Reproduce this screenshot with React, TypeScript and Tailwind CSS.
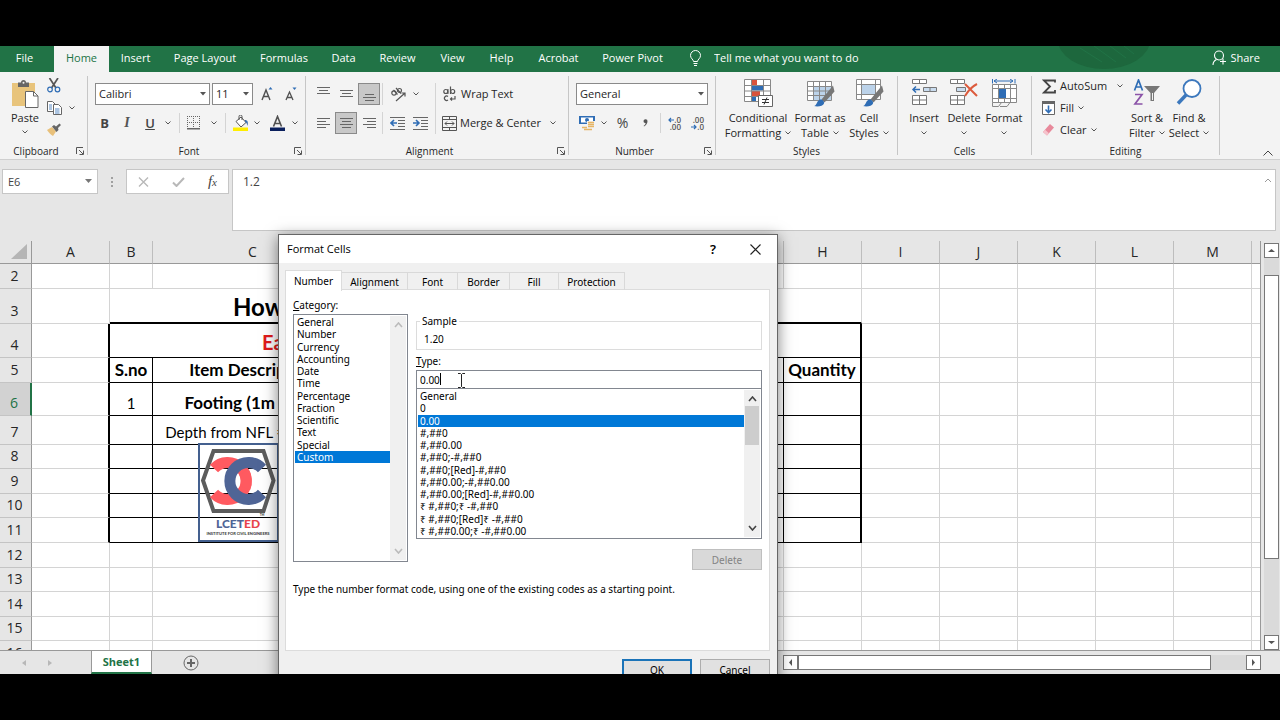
import type { ReactNode } from 'react';
import clsx from 'clsx';

const ribbonTabs = [
  { label: 'Insert', width: 'w-[53px]' },
  { label: 'Page Layout', width: 'w-[86px]' },
  { label: 'Formulas', width: 'w-[72px]' },
  { label: 'Data', width: 'w-[47px]' },
  { label: 'Review', width: 'w-[61px]' },
  { label: 'View', width: 'w-[49px]' },
  { label: 'Help', width: 'w-[49px]' },
  { label: 'Acrobat', width: 'w-[65px]' },
  { label: 'Power Pivot', width: 'w-[83px]' },
];

const columns = [
  { name: 'A', width: 'w-[78px]' },
  { name: 'B', width: 'w-[43px]' },
  { name: 'C', width: 'w-[200px]' },
  { name: 'D', width: 'w-[108px]' },
  { name: 'E', width: 'w-[108px]' },
  { name: 'F', width: 'w-[107px]' },
  { name: 'G', width: 'w-[108px]' },
  { name: 'H', width: 'w-[78px]' },
  { name: 'I', width: 'w-[78px]' },
  { name: 'J', width: 'w-[78px]' },
  { name: 'K', width: 'w-[78px]' },
  { name: 'L', width: 'w-[78px]' },
  { name: 'M', width: 'w-[78px]' },
];

type SheetRow = {
  num: number;
  height: string;
  cells?: Record<string, string>;
  bold?: boolean;
};

const sheetRows: SheetRow[] = [
  { num: 2, height: 'h-[25px]' },
  { num: 3, height: 'h-[35px]' },
  { num: 4, height: 'h-[34px]' },
  { num: 5, height: 'h-[25px]', cells: { B: 'S.no', C: 'Item Description', H: 'Quantity' }, bold: true },
  { num: 6, height: 'h-[33px]', cells: { B: '1', C: 'Footing (1m x 1m)' } },
  { num: 7, height: 'h-[29px]', cells: { C: 'Depth from NFL = 1.200m' } },
  { num: 8, height: 'h-[24px]' },
  { num: 9, height: 'h-[25px]' },
  { num: 10, height: 'h-[24px]' },
  { num: 11, height: 'h-[25px]' },
  { num: 12, height: 'h-[25px]' },
  { num: 13, height: 'h-[24px]' },
  { num: 14, height: 'h-[25px]' },
  { num: 15, height: 'h-[24px]' },
  { num: 16, height: 'h-[25px]' },
];

const categories = [
  'General',
  'Number',
  'Currency',
  'Accounting',
  'Date',
  'Time',
  'Percentage',
  'Fraction',
  'Scientific',
  'Text',
  'Special',
  'Custom',
];

const formatCodes = [
  'General',
  '0',
  '0.00',
  '#,##0',
  '#,##0.00',
  '#,##0;-#,##0',
  '#,##0;[Red]-#,##0',
  '#,##0.00;-#,##0.00',
  '#,##0.00;[Red]-#,##0.00',
  '₹ #,##0;₹ -#,##0',
  '₹ #,##0;[Red]₹ -#,##0',
  '₹ #,##0.00;₹ -#,##0.00',
];

const dialogTabs = [
  { label: 'Alignment', width: 'w-[66px]' },
  { label: 'Font', width: 'w-[50px]' },
  { label: 'Border', width: 'w-[52px]' },
  { label: 'Fill', width: 'w-[49px]' },
  { label: 'Protection', width: 'w-[66px]' },
];

export default function App() {
  return (
    <div className="h-screen bg-black py-[46px] font-['Open_Sans','Noto_Sans',sans-serif] text-[11px] leading-4 text-[#262626]">
      <div className="relative flex h-full flex-col overflow-hidden bg-[#e6e6e6]">
        <RibbonTabs />
        <Ribbon />
        <FormulaBar />
        <div className="flex min-h-0 flex-1">
          <Sheet />
          <VerticalScrollbar />
        </div>
        <SheetTabs />
        <FormatCellsDialog />
      </div>
    </div>
  );
}

/* ---------- ribbon ---------- */

function RibbonTabs() {
  return (
    <nav className="relative flex h-[26px] shrink-0 overflow-hidden bg-[#217346] text-white">
      <svg className="absolute top-0 right-[80px]" width="160" height="26" fill="#1d673d">
        <ellipse cx="64" cy="-6" rx="46" ry="29" />
        <ellipse cx="-22" cy="0" rx="16" ry="4" />
        <path d="M40 2l22 14M54 0l22 16M70 0l16 12M84 0l10 8" stroke="#217346" />
      </svg>
      <button className="w-[54px] pr-[5px] pb-[2px]">File</button>
      <button className="w-[55px] bg-[#f3f3f3] pb-[2px] text-[#217346]">Home</button>
      {ribbonTabs.map((tab) => (
        <button key={tab.label} className={clsx('pb-[2px]', tab.width)}>
          {tab.label}
        </button>
      ))}
      <label className="flex flex-1 items-center pb-[2px]">
        <svg className="mr-[13px] ml-4" width="11" height="16" fill="none" stroke="#fff">
          <path d="M3.5 11.5c0-2-3-3-3-6a5 5 0 0 1 10 0c0 3-3 4-3 6zM3.5 13.5h4M4 15.5h3" />
        </svg>
        <input
          className="w-[160px] bg-transparent text-white placeholder:text-white"
          placeholder="Tell me what you want to do"
        />
      </label>
      <button className="flex items-center gap-1 pr-5 pb-[2px]">
        <svg width="14" height="16" fill="none" stroke="#fff" strokeWidth="1.1">
          <circle cx="7" cy="5.500" r="4.500" />
          <path d="M1 15c0-3 1.500-4.500 3.500-5.500M11 8.500v6M8 11.500h6" />
        </svg>
        Share
      </button>
    </nav>
  );
}

function Ribbon() {
  return (
    <div className="flex h-[88px] shrink-0 border-b border-[#cfcfcf] bg-[#f3f3f3]">
      <Group label="Clipboard" width="w-[87px]" launcher>
        <div className="flex">
          <button className="flex w-[45px] flex-col items-center pt-2 pl-[5px]">
            <PasteIcon />
            <span className="mt-[2px]">Paste</span>
            <Chevron className="mt-1" />
          </button>
          <div className="flex flex-col gap-2 pt-[6px]">
            <button className="w-5" aria-label="Cut">
              <ScissorsIcon />
            </button>
            <button className="flex items-center gap-[7px]" aria-label="Copy">
              <CopyIcon />
              <Chevron />
            </button>
            <button className="w-5 pl-[2px]" aria-label="Format Painter">
              <BrushIcon />
            </button>
          </div>
        </div>
      </Group>
      <Divider />

      <Group label="Font" width="w-[217px]" launcher>
        <div className="flex flex-col gap-[7px] pt-[11px] pl-[7px]">
          <div className="flex h-[22px] items-center gap-[2px]">
            <ComboBox label="Font" value="Calibri" width="w-[115px]" />
            <ComboBox label="Font size" value="11" width="w-[41px]" />
            <button className="ml-[6px] flex w-[22px]" aria-label="Increase Font Size">
              <svg width="14" height="16" fill="none" stroke="#505050" strokeWidth="1.400">
                <path d="M1 14L5 4l4 10M2.500 10.500h5" />
                <path d="M7.500 3.500l2-2.500 2 2.500z" fill="#2f6db5" stroke="none" />
              </svg>
            </button>
            <button className="flex w-[20px]" aria-label="Decrease Font Size">
              <svg width="14" height="16" fill="none" stroke="#505050" strokeWidth="1.300">
                <path d="M1 14l3.500-8L8 14M2.500 11.500h4" />
                <path d="M7.500 1.500h4l-2 2.500z" fill="#2f6db5" stroke="none" />
              </svg>
            </button>
          </div>
          <div className="flex h-[22px] items-center">
            <button className="w-[19px] text-[13px] font-bold text-[#444]">B</button>
            <button className="w-[26px] font-['Liberation_Serif',serif] text-[14px] font-bold text-[#555] italic">I</button>
            <button className="w-[20px] text-[13px] font-semibold text-[#444] underline">U</button>
            <ChevronButton width="w-[15px]" />
            <ThinRule className="mx-[4px]" />
            <button className="w-[22px] pl-[3px]" aria-label="Borders">
              <svg width="14" height="14" fill="#666">
                <path d="M0 0h1v1H0zM2 0h1v1H2zM4 0h1v1H4zM6 0h1v1H6zM8 0h1v1H8zM10 0h1v1h-1zM12 0h1v1h-1zM0 6h1v1H0zM2 6h1v1H2zM4 6h1v1H4zM6 6h1v1H6zM8 6h1v1H8zM10 6h1v1h-1zM12 6h1v1h-1z" />
                <path d="M0 2h1v1H0zM0 4h1v1H0zM0 8h1v1H0zM0 10h1v1H0zM6 2h1v1H6zM6 4h1v1H6zM6 8h1v1H6zM6 10h1v1H6zM12 2h1v1h-1zM12 4h1v1h-1zM12 8h1v1h-1zM12 10h1v1h-1zM0 12h13v1.500H0z" />
              </svg>
            </button>
            <ChevronButton width="w-[15px]" />
            <ThinRule className="ml-[4px]" />
            <button className="w-[24px] pl-[7px]" aria-label="Fill Color">
              <svg width="17" height="16" fill="none" stroke="#555">
                <path d="M3 6.500L8 2l5 5.500-5 4.500z" fill="#fff" />
                <path d="M6 5V1.500a1.500 1.500 0 0 1 3 0V5" />
                <path d="M12 5c2.500 0 3.500 2 2.500 6-.6-2.500-1-3.500-2.500-4z" fill="#3b6fb0" stroke="none" />
                <path d="M0 12.500h15V16H0z" fill="#ffee00" stroke="none" />
              </svg>
            </button>
            <ChevronButton width="w-[14px]" />
            <button className="w-[24px] pl-[6px]" aria-label="Font Color">
              <svg width="16" height="16" fill="none" stroke="#505050" strokeWidth="1.600">
                <path d="M3.500 11.500L7.500 1.500l4 10M5 8.500h5" />
                <path d="M0 12.500h15V16H0z" fill="#0a1f5c" stroke="none" />
              </svg>
            </button>
            <ChevronButton width="w-[14px]" />
          </div>
        </div>
      </Group>
      <Divider />

      <Group label="Alignment" width="w-[262px]" launcher>
        <div className="flex pt-[11px] pl-[6px]">
          <div className="flex flex-col gap-[7px]">
            <div className="flex h-[22px] gap-px">
              <AlignButton label="Top Align" d="M0 .5h13M2 3.500h9M0 6.500h13" />
              <AlignButton label="Middle Align" d="M0 3.500h13M2 6.500h9M0 9.500h13" />
              <AlignButton label="Bottom Align" d="M2 7.500h9M0 10.500h13M2 13.500h9" active />
              <ThinRule className="mr-[6px] ml-px" />
              <button className="flex items-center gap-[6px]" aria-label="Orientation">
                <svg width="17" height="17" fill="none" stroke="#555" strokeWidth="1.200">
                  <circle cx="4" cy="7" r="2.200" />
                  <path d="M3.500 4l4 4.500M6 2l5 5.500" />
                  <circle cx="9.500" cy="4.500" r="2" />
                  <path d="M6 15l9-8M11.500 7h3.500v3.500" />
                </svg>
                <Chevron />
              </button>
            </div>
            <div className="flex h-[22px] gap-px">
              <AlignButton label="Align Left" d="M0 2.500h13M0 5.500h9M0 8.500h13M0 11.500h9" />
              <AlignButton label="Center" d="M0 2.500h13M2 5.500h9M0 8.500h13M2 11.500h9" active />
              <AlignButton label="Align Right" d="M0 2.500h13M4 5.500h9M0 8.500h13M4 11.500h9" />
              <ThinRule className="mr-[6px] ml-px" />
              <button className="w-[22px]" aria-label="Decrease Indent">
                <svg width="16" height="14" fill="none" stroke="#666">
                  <path d="M0 1.500h15M8 4.500h7M8 7.500h7M8 10.500h7M0 13.500h15" />
                  <path d="M7 7H1M4 4L1 7l3 3" stroke="#2f6db5" strokeWidth="1.600" />
                </svg>
              </button>
              <button className="w-[22px]" aria-label="Increase Indent">
                <svg width="16" height="14" fill="none" stroke="#666">
                  <path d="M0 1.500h15M8 4.500h7M8 7.500h7M8 10.500h7M0 13.500h15" />
                  <path d="M0 7h6M3 4l3 3-3 3" stroke="#2f6db5" strokeWidth="1.600" />
                </svg>
              </button>
            </div>
          </div>
          <ThinRule className="h-[51px]" />
          <div className="flex flex-col gap-[7px] pl-[6px]">
            <button className="flex h-[22px] items-center gap-1">
              <svg className="ml-px" width="14" height="16" fill="none" stroke="#555" strokeWidth="1.200">
                <circle cx="2.800" cy="5.500" r="2" />
                <path d="M4.900 3v5M7.500.5v7.500" />
                <circle cx="9.700" cy="5.500" r="2" />
                <path d="M5 10.500a2.200 2.200 0 1 0 0 3.500M12 10v3H7.500M9 11.500L7.500 13 9 14.500" />
              </svg>
              Wrap Text
            </button>
            <button className="flex h-[22px] items-center">
              <svg className="mr-[3px]" width="15" height="15" fill="none" stroke="#555">
                <path d="M.5.5h14v14H.5zM.5 3.500h14M.5 11.500h14M7.500.5v3M7.500 11.500v3M3 7.500h9M5 5.500l-2 2 2 2M10 5.500l2 2-2 2" />
              </svg>
              Merge &amp; Center
              <Chevron className="ml-[9px]" />
            </button>
          </div>
        </div>
      </Group>
      <Divider />

      <Group label="Number" width="w-[146px]" launcher>
        <div className="flex flex-col gap-[7px] pt-[11px] pl-[7px]">
          <ComboBox label="Number Format" value="General" width="w-[132px]" />
          <div className="flex h-[22px] items-center pl-[3px]">
            <button className="flex items-center gap-[5px]" aria-label="Accounting Number Format">
              <svg width="17" height="16" fill="none">
                <path d="M0 1h16v8H0z" fill="#2f6db5" />
                <path d="M2 2.500h12v5H2z" fill="#fff" />
                <circle cx="8" cy="5" r="2" fill="#2f6db5" />
                <path d="M8 6h8v7H8z" fill="#f3f3f3" />
                <path d="M9 7.500h6M9 9.500h6M9 11.500h6M3 12.500h5M5 14.500h8" stroke="#e6b566" strokeWidth="1.300" />
              </svg>
              <Chevron />
            </button>
            <button className="w-[31px] text-[14px] text-[#444]">%</button>
            <button className="flex w-[14px] justify-center" aria-label="Comma Style">
              <svg width="5" height="8" fill="#555">
                <path d="M.5 2a2 2 0 0 1 4 .3C4.500 4.500 3 6.500 1 7.500l-.3-.7C2 6 2.600 5 2.600 4A1.900 1.900 0 0 1 .5 2z" />
              </svg>
            </button>
            <ThinRule className="mr-[3px] ml-[8px]" />
            <DecimalButton label="Increase Decimal" lines={['.0', '.00']} arrow="left" />
            <DecimalButton label="Decrease Decimal" lines={['.00', '.0']} arrow="right" />
          </div>
        </div>
      </Group>
      <Divider />

      <Group label="Styles" width="w-[181px]">
        <div className="flex pt-[7px] pl-[8px]">
          <BigButton lines={['Conditional', 'Formatting']} width="w-[68px]" icon={<ConditionalIcon />} />
          <BigButton lines={['Format as', 'Table']} width="w-[56px]" icon={<TableStyleIcon />} />
          <BigButton lines={['Cell', 'Styles']} width="w-[42px]" icon={<CellStyleIcon />} />
        </div>
      </Group>
      <Divider />

      <Group label="Cells" width="w-[133px]">
        <div className="flex pt-[7px] pl-[6px]">
          <BigButton lines={['Insert']} width="w-[40px]" icon={<InsertIcon />} />
          <BigButton lines={['Delete']} width="w-[40px]" icon={<DeleteIcon />} />
          <BigButton lines={['Format']} width="w-[40px]" icon={<FormatIcon />} />
        </div>
      </Group>
      <Divider />

      <Group label="Editing" width="w-[187px]">
        <div className="flex pt-[3px] pl-[10px]">
          <div className="flex w-[84px] flex-col">
            <button className="flex h-[22px] items-center">
              <svg className="mr-[3px]" width="15" height="15" fill="none" stroke="#444" strokeWidth="1.800">
                <path d="M13 3.500V1.500H2l6 6-6 6h11v-2.500" />
              </svg>
              AutoSum
              <Chevron className="ml-[10px]" />
            </button>
            <button className="flex h-[22px] items-center gap-1">
              <svg width="14" height="14" fill="none">
                <path d="M.5.5h12v13H.5z" fill="#fff" stroke="#666" />
                <path d="M0 0h13v3H0z" fill="#666" />
                <path d="M6.500 4.500v7M3.500 8.500l3 3 3-3" stroke="#2f6db5" strokeWidth="1.600" />
              </svg>
              Fill
              <Chevron />
            </button>
            <button className="flex h-[22px] items-center gap-1">
              <svg width="14" height="14">
                <path d="M1 9l7-8 4 3.500-7 8z" fill="#e8899b" />
                <path d="M1 9l2-2.300 4 3.600L5 12.500z" fill="#f6c3cc" />
              </svg>
              Clear
              <Chevron />
            </button>
          </div>
          <div className="flex pt-1">
            <BigButton lines={['Sort &', 'Filter']} width="w-[42px]" icon={<SortIcon />} />
            <BigButton lines={['Find &', 'Select']} width="w-[42px]" icon={<FindIcon />} />
          </div>
        </div>
      </Group>
      <Divider />
      <button className="mb-[3px] ml-auto self-end pr-[7px]" aria-label="Collapse the Ribbon">
        <svg width="10" height="6" fill="none" stroke="#444">
          <path d="M.5 5.500L5 1l4.500 4.500" />
        </svg>
      </button>
    </div>
  );
}

type GroupProps = {
  label: string;
  width: string;
  launcher?: boolean;
  children: ReactNode;
};

function Group({ label, width, launcher, children }: GroupProps) {
  return (
    <section className={clsx('flex shrink-0 flex-col', width)}>
      <div className="h-[71px]">{children}</div>
      <div className="flex h-4 items-center text-[10px]">
        <h2 className={clsx('flex-1 text-center', launcher && 'pr-1')}>{label}</h2>
        {launcher && (
          <button className="pr-[3px]" aria-label={`${label} settings`}>
            <svg width="8" height="8" fill="none" stroke="#555">
              <path d="M.5 7V.5H7M3 3l4 4M7.500 3.500v4h-4" />
            </svg>
          </button>
        )}
      </div>
    </section>
  );
}

function Divider() {
  return <div className="mt-1 h-[79px] w-px shrink-0 bg-[#c6c6c6]" />;
}

function ThinRule({ className }: { className?: string }) {
  return <div className={clsx('min-h-5 w-px shrink-0 bg-[#d4d4d4]', className)} />;
}

function Chevron({ className }: { className?: string }) {
  return (
    <svg className={clsx('shrink-0', className)} width="6" height="4" fill="none" stroke="#555">
      <path d="M.5.5L3 3 5.500.5" />
    </svg>
  );
}

function ChevronButton({ width }: { width: string }) {
  return (
    <button className={clsx('flex h-full items-center justify-center', width)} aria-label="More options">
      <Chevron />
    </button>
  );
}

function ComboBox({ label, value, width }: { label: string; value: string; width: string }) {
  return (
    <div className={clsx('relative h-[22px]', width)}>
      <select
        aria-label={label}
        className="h-full w-full appearance-none border border-[#8a8a8a] bg-white pb-px pl-[3px] text-[11px]"
      >
        <option>{value}</option>
      </select>
      <svg className="pointer-events-none absolute top-[9px] right-1" width="6" height="4" fill="#555">
        <path d="M0 0h6L3 3.500z" />
      </svg>
    </div>
  );
}

function AlignButton({ label, d, active }: { label: string; d: string; active?: boolean }) {
  return (
    <button
      aria-label={label}
      className={clsx(
        'flex w-[22px] items-center justify-center border',
        active ? 'border-[#8a8a8a] bg-[#c8c8c8]' : 'border-transparent'
      )}
    >
      <svg width="13" height="15" fill="none" stroke="#666">
        <path d={d} />
      </svg>
    </button>
  );
}

type DecimalButtonProps = { label: string; lines: string[]; arrow: 'left' | 'right' };

function DecimalButton({ label, lines, arrow }: DecimalButtonProps) {
  const arrowIcon = (
    <svg width="6" height="6" fill="none" stroke="#2f6db5" strokeWidth="1.200">
      <path d={arrow === 'left' ? 'M6 3H1M3 1L1 3l2 2' : 'M0 3h5M3 1l2 2-2 2'} />
    </svg>
  );
  return (
    <button
      aria-label={label}
      className="flex w-[23px] flex-col items-end pr-[6px] text-[8px] leading-[7px] font-semibold text-[#555]"
    >
      <span className="flex items-center">
        {arrow === 'left' && arrowIcon}
        {lines[0]}
      </span>
      <span className="flex items-center">
        {arrow === 'right' && arrowIcon}
        {lines[1]}
      </span>
    </button>
  );
}

function BigButton({ lines, width, icon }: { lines: string[]; width: string; icon: ReactNode }) {
  return (
    <button className={clsx('flex flex-col items-center leading-[15px] whitespace-nowrap', width)}>
      <span className="flex h-[31px] items-start">{icon}</span>
      <span>{lines[0]}</span>
      <span className="flex h-[15px] items-center gap-1">
        {lines[1]}
        <Chevron />
      </span>
    </button>
  );
}

/* ---------- ribbon icons ---------- */

function PasteIcon() {
  return (
    <svg className="shrink-0" width="28" height="28">
      <path d="M1 3h23v23H1z" fill="#e8c47c" />
      <path d="M7 2.500h3a2.500 2.500 0 0 1 5 0h3V7H7z" fill="#666" />
      <circle cx="12.500" cy="2.800" r="1" fill="#f3f3f3" />
      <path d="M14.500 11.500h8l4.500 4.500v11.500H14.500z" fill="#fff" stroke="#666" />
      <path d="M22.500 11.500V16H27" fill="none" stroke="#666" />
    </svg>
  );
}

function ScissorsIcon() {
  return (
    <svg className="ml-[2px]" width="14" height="15" fill="none">
      <path d="M2.500 0l6.500 10M11 0L4.500 10" stroke="#555" strokeWidth="1.700" />
      <circle cx="3" cy="11.500" r="2.300" stroke="#2f6db5" strokeWidth="1.200" />
      <circle cx="10.500" cy="11.500" r="2.300" stroke="#2f6db5" strokeWidth="1.200" />
    </svg>
  );
}

function CopyIcon() {
  return (
    <svg className="ml-[2px]" width="15" height="14" fill="#fff" stroke="#666">
      <path d="M.5.5h5l3 3v7h-8z" />
      <path d="M6.500 3.500h5l3 3v7h-8z" />
      <path d="M2 4h3M2 6h3M2 8h3M8 8h4.500M8 10h4.500M8 12h4.500" stroke="#2f6db5" strokeWidth=".8" />
    </svg>
  );
}

function BrushIcon() {
  return (
    <svg width="14" height="13">
      <path d="M0 7l5-3 4 4.500L6 13C4 12 2 10 0 7z" fill="#e8c07a" />
      <path d="M5 3.500L7 2l2 1.500L12.500.5 14 2l-3 3 .5 2L9.500 9z" fill="#666" />
    </svg>
  );
}

function ConditionalIcon() {
  return (
    <svg width="29" height="29">
      <path d="M.5.5h26v22H.5z" fill="#fff" />
      <path d="M8 1h5v5H8zM8 12h8v5H8z" fill="#d9533c" />
      <path d="M8 6.500h11v5H8zM8 17.500h4v5H8z" fill="#2f6db5" />
      <path d="M.5.5h26v22H.5zM.5 6.500h26M.5 12h26M.5 17.500h26M7.500.5v22M19.500.5v22" fill="none" stroke="#888" />
      <path d="M14.500 16.500h14v11h-14z" fill="#fff" stroke="#666" />
      <path d="M18 20.500h7M18 23.500h7M23 18.500l-3 7" stroke="#333" />
    </svg>
  );
}

function StyleBrush() {
  return (
    <>
      <path d="M27 6.500l1.500 6-10 11-3-3z" fill="#777" />
      <path d="M8 27c3-.5 2.500-5 6-6.500 2-.5 4.500 1.500 4 4-.8 2.500-6 3.500-10 2.500z" fill="#2f6db5" />
    </>
  );
}

function TableStyleIcon() {
  return (
    <svg width="29" height="29">
      <path d="M1.500 2.500h24v19h-24z" fill="#fff" />
      <path d="M8 8h17v13H8z" fill="#bcd3ea" />
      <path
        d="M1.500 2.500h24v19h-24zM1.500 7.500h24M1.500 12h24M1.500 16.500h24M7.500 2.500v19M13.500 2.500v19M19.500 2.500v19"
        fill="none"
        stroke="#888"
      />
      <StyleBrush />
    </svg>
  );
}

function CellStyleIcon() {
  return (
    <svg width="29" height="29">
      <path d="M1.500.5h24v20h-24z" fill="#fff" />
      <path d="M7 6h14v9H7z" fill="#bcd3ea" />
      <path d="M1.500.5h24v20h-24zM1.500 5.500h24M1.500 15.500h24M6.500.5v20M20.500.5v20" fill="none" stroke="#888" />
      <StyleBrush />
    </svg>
  );
}

function InsertIcon() {
  return (
    <svg width="26" height="27" fill="#fff" stroke="#777">
      <path d="M1.500.5h14v4h-14zM8.500.5v4M1.500 16.500h14v9h-14zM8.500 16.500v9M1.500 21h14" />
      <path d="M12.500 8.500h13v4h-13zM19 8.500v4" fill="#c9dcef" />
      <path d="M9 10.500H2M5 7.500l-3 3 3 3" fill="none" stroke="#2f6db5" strokeWidth="1.500" />
    </svg>
  );
}

function DeleteIcon() {
  return (
    <svg width="28" height="27" fill="#fff" stroke="#777">
      <path d="M.5.5h14v4H.5zM7.500.5v4M.5 16.500h14v9H.5zM7.500 16.500v9M.5 21h14" />
      <path d="M6.500 8.500h9v4h-9z" fill="#c9dcef" />
      <path d="M15 5l12 12M27 5C21 8 18 12 15 17" fill="none" stroke="#dc5b3d" strokeWidth="2" />
    </svg>
  );
}

function FormatIcon() {
  return (
    <svg width="27" height="29" fill="#fff" stroke="#888">
      <path d="M1.500 5.500h24v18h-24zM1.500 9.500h24M1.500 19.500h24M7.500 5.500v18M19.500 5.500v18M13.500 5.500v4M13.500 19.500v4" />
      <path d="M8 10h7v9H8z" fill="#2f6db5" stroke="none" />
      <path d="M1.500 23.500v4h6l3-4M9 27.500h7l3-4" fill="none" />
      <path d="M3 2h19M6 0L3 2l3 2M19 0l3 2-3 2M1.500 0v4.500M24 0v4.500" fill="none" stroke="#2f6db5" />
    </svg>
  );
}

function SortIcon() {
  return (
    <svg width="28" height="27" fill="none">
      <path d="M1.500 11.500L5.500 1l4 10.500M3 8h5" stroke="#2f6db5" strokeWidth="1.700" />
      <path d="M2 15.500h7l-7 9.500h7.500" stroke="#8b53a8" strokeWidth="1.700" />
      <path d="M11 7h16l-6 7v8h-3.500v-8z" fill="#777" />
      <path d="M19.500 14v7" stroke="#f3f3f3" />
    </svg>
  );
}

function FindIcon() {
  return (
    <svg width="27" height="27" fill="none">
      <circle cx="16" cy="9.500" r="8.500" fill="#fff" stroke="#3c78bd" strokeWidth="1.800" />
      <path d="M10 16l-8 8.500" stroke="#3c78bd" strokeWidth="3.500" />
    </svg>
  );
}

/* ---------- formula bar ---------- */

function FormulaBar() {
  return (
    <div className="flex h-[81px] shrink-0 pt-[9px] pr-1 pl-[2px] text-[#444]">
      <div className="relative h-[25px] w-[96px]">
        <input
          aria-label="Name Box"
          className="h-full w-full border border-[#c6c6c6] bg-white pl-[5px]"
          defaultValue="E6"
        />
        <svg className="absolute top-[10px] right-[6px]" width="7" height="5" fill="#777">
          <path d="M0 0h7L3.500 4z" />
        </svg>
      </div>
      <svg className="mx-[12px] mt-2" width="4" height="10" fill="#a0a0a0">
        <path d="M1 0h2v2H1zM1 4h2v2H1zM1 8h2v2H1z" />
      </svg>
      <div className="flex h-[25px] w-[103px] items-center justify-between border border-[#c6c6c6] bg-white px-[11px]">
        <button aria-label="Cancel entry">
          <svg width="11" height="10" fill="none" stroke="#b8b8b8" strokeWidth="1.400">
            <path d="M1 .5l9 9M10 .5l-9 9" />
          </svg>
        </button>
        <button aria-label="Enter">
          <svg width="13" height="10" fill="none" stroke="#b8b8b8" strokeWidth="2">
            <path d="M1 5.500L4.500 9 12 1" />
          </svg>
        </button>
        <button className="font-['Liberation_Serif',serif] text-[15px] italic" aria-label="Insert Function">
          f<span className="text-[11px]">x</span>
        </button>
      </div>
      <div className="relative ml-[3px] h-[62px] flex-1">
        <textarea
          aria-label="Formula Bar"
          className="block h-full w-full resize-none border border-[#c6c6c6] bg-white pt-1 pl-[10px] text-[12px] leading-4"
          defaultValue="1.2"
        />
        <svg className="absolute top-[9px] right-1" width="8" height="5" fill="none" stroke="#999">
          <path d="M1 4l3-3 3 3" />
        </svg>
      </div>
    </div>
  );
}

/* ---------- worksheet ---------- */

function Sheet() {
  return (
    <div className="relative flex-1 overflow-hidden border-r border-[#999] bg-white">
      <table className="w-full table-fixed border-separate border-spacing-0 text-[14px] leading-[22px]">
        <colgroup>
          <col className="w-8" />
          {columns.map((column) => (
            <col key={column.name} className={column.width} />
          ))}
          <col />
        </colgroup>
        <thead>
          <tr className="h-[23px] bg-[#e6e6e6]">
            <th className="border-r border-b border-[#999] p-0">
              <svg className="mr-[3px] ml-auto" width="17" height="16" fill="#b5b5b5">
                <path d="M16 0v15H0z" />
              </svg>
            </th>
            {columns.map((column) => (
              <th key={column.name} className="border-r border-b border-r-[#bdbdbd] border-b-[#999] p-0 font-normal">
                {column.name}
              </th>
            ))}
            <th className="border-b border-[#999] p-0" />
          </tr>
        </thead>
        <tbody>
          {sheetRows.map((row) => (
            <Row key={row.num} row={row} />
          ))}
        </tbody>
      </table>
      <SheetLogo />
    </div>
  );
}

function Row({ row }: { row: SheetRow }) {
  const framed = row.num >= 4 && row.num <= 11;
  const active = row.num === 6;
  const merged = row.num === 3 || row.num === 4;
  const trailing = columns.slice(8);

  return (
    <tr className={clsx('align-bottom', row.height)}>
      <th
        scope="row"
        className={clsx(
          'border-b border-b-[#c4c4c4] p-0 pr-[2px] pb-px font-normal',
          active ? 'border-r-2 border-r-[#217346] bg-[#d2d2d2] text-[#217346]' : 'border-r border-r-[#999] bg-[#e6e6e6]'
        )}
      >
        {row.num}
      </th>
      <td
        className={clsx(
          'border-b border-b-[#d4d4d4] p-0',
          framed ? 'border-r-2 border-r-black' : 'border-r border-r-[#d4d4d4]'
        )}
      />
      {row.num === 3 && (
        <td
          colSpan={7}
          className="border-r border-b-2 border-r-[#d4d4d4] border-b-black p-0 pl-[123px] text-left font-[Lato,sans-serif] text-[24px] leading-[30px] font-bold text-black"
        >
          How
        </td>
      )}
      {row.num === 4 && (
        <td
          colSpan={7}
          className="border-r-2 border-b border-black p-0 pl-[152px] text-left font-[Lato,sans-serif] text-[20px] leading-[30px] font-bold text-[#e01b1b]"
        >
          Earth
        </td>
      )}
      {!merged &&
        columns.slice(1, 8).map(({ name }) => (
          <td
            key={name}
            className={clsx(
              'border-b p-0 pb-px text-center font-[Lato,sans-serif] whitespace-nowrap text-black',
              framed ? 'border-black' : 'border-[#d4d4d4]',
              framed && name === 'H' ? 'border-r-2' : 'border-r',
              row.bold || (active && name === 'C') ? 'text-[17px] font-bold' : 'text-[15px]'
            )}
          >
            {row.cells?.[name]}
          </td>
        ))}
      {trailing.map(({ name }) => (
        <td key={name} className="border-r border-b border-[#d4d4d4] p-0" />
      ))}
      <td className="border-b border-[#d4d4d4] p-0" />
    </tr>
  );
}

// Floating picture anchored over C8:C11
function SheetLogo() {
  return (
    <svg className="absolute top-[202px] left-[198px]" width="81" height="99" fill="none">
      <rect x="1" y="1" width="79" height="97" stroke="#44608f" strokeWidth="2" />
      <path d="M15.500 8h50l10 29.500-10 30.500h-50L5 37.500z" stroke="#5c5c5c" strokeWidth="4" />
      <path d="M16 25.500a18.500 18.500 0 1 1 0 25" stroke="#ff5a60" strokeWidth="11" />
      <path d="M64 25.500a18.500 18.500 0 1 0 0 25" stroke="#4f6596" strokeWidth="11" />
      <path d="M46 29a18.500 18.500 0 0 1 1 16" stroke="#ff5a60" strokeWidth="11" />
      <g fontFamily="Lato, sans-serif" fontWeight="900" textAnchor="middle">
        <text x="40" y="85" fontSize="12" fill="#4f6596">
          LCET<tspan fill="#e8434b">ED</tspan>
        </text>
        <text x="40" y="92" fontSize="4" fill="#444">
          INSTITUTE FOR CIVIL ENGINEERS
        </text>
        <text x="64" y="73" fontSize="3" fill="#444">
          TM
        </text>
      </g>
    </svg>
  );
}

function ScrollButton({ label, d }: { label: string; d: string }) {
  return (
    <button
      aria-label={label}
      className="flex h-[15px] w-[15px] shrink-0 items-center justify-center border border-[#777] bg-white"
    >
      <svg width="7" height="7" fill="#555">
        <path d={d} />
      </svg>
    </button>
  );
}

function VerticalScrollbar() {
  return (
    <div className="flex w-[19px] shrink-0 flex-col pt-[2px] pl-[3px]">
      <ScrollButton label="Scroll up" d="M0 5h7L3.500 2z" />
      <div className="w-[15px] flex-1 bg-[#dadada] pt-[17px]">
        <div className="h-[79%] border border-[#777] bg-white" />
      </div>
      <ScrollButton label="Scroll down" d="M0 2h7L3.500 5z" />
    </div>
  );
}

function SheetTabs() {
  return (
    <div className="flex h-6 shrink-0 border-t border-[#999]">
      <div className="flex w-[91px] items-center gap-[21px] pl-[22px]">
        <button aria-label="Previous sheet">
          <svg width="5" height="8" fill="#b8b8b8">
            <path d="M4 1v6L0 4z" />
          </svg>
        </button>
        <button aria-label="Next sheet">
          <svg width="5" height="8" fill="#b8b8b8">
            <path d="M0 1v6l4-3z" />
          </svg>
        </button>
      </div>
      <button className="h-[23px] w-[61px] border-x border-b-2 border-x-[#999] border-b-[#217346] bg-white font-bold text-[#217346]">
        Sheet1
      </button>
      <button className="ml-[31px]" aria-label="New sheet">
        <svg width="16" height="16" fill="none" stroke="#666">
          <circle cx="8" cy="8" r="7" />
          <path d="M4 8h8M8 4v8" strokeWidth="2" />
        </svg>
      </button>
      <div className="mr-[19px] ml-auto flex w-[478px] items-center">
        <ScrollButton label="Scroll left" d="M5 0v7L2 3.500z" />
        <div className="h-[15px] flex-1 bg-[#dadada] pr-[35px]">
          <div className="h-full border border-[#777] bg-white" />
        </div>
        <ScrollButton label="Scroll right" d="M2 0v7l3-3.500z" />
      </div>
    </div>
  );
}

/* ---------- Format Cells ---------- */

function FormatCellsDialog() {
  return (
    <div
      role="dialog"
      aria-labelledby="format-cells-title"
      className="absolute top-[188px] left-[278px] w-[500px] border border-[#666] bg-[#f0f0f0] font-['Noto_Sans',sans-serif] text-[10px] leading-[14px] text-black shadow-[0_3px_14px_rgba(0,0,0,0.5)]"
    >
      <header className="flex h-7 items-center bg-white pl-2">
        <h1 id="format-cells-title" className="flex-1 font-['Open_Sans',sans-serif] text-[11px]">
          Format Cells
        </h1>
        <button className="w-[42px] text-[13px] font-semibold">?</button>
        <button className="flex w-[43px] justify-center" aria-label="Close">
          <svg width="11" height="11" fill="none" stroke="#222" strokeWidth="1.100">
            <path d="M.5.5l10 10M10.500.5l-10 10" />
          </svg>
        </button>
      </header>
      <div className="pt-[7px] pr-[7px] pb-2 pl-[6px]">
        <div role="tablist" className="flex h-[20px] items-end">
          <button
            role="tab"
            aria-selected="true"
            className="h-[21px] w-[57px] shrink-0 self-start border border-b-0 border-[#dcdcdc] bg-white"
          >
            Number
          </button>
          {dialogTabs.map((tab) => (
            <button
              key={tab.label}
              role="tab"
              className={clsx('h-[18px] border-t border-r border-[#d9d9d9]', tab.width)}
            >
              {tab.label}
            </button>
          ))}
        </div>
        <div className="-mt-px h-[362px] border border-[#dcdcdc] bg-white px-[7px] pt-2">
          <div className="flex gap-2">
            <CategoryList />
            <TypePanel />
          </div>
          <p className="mt-[12px]">
            Type the number format code, using one of the existing codes as a starting point.
          </p>
        </div>
        <div className="mt-2 flex justify-end gap-2">
          <button className="h-[22px] w-[70px] border-2 border-[#1a73b8] bg-[#e1e1e1]">OK</button>
          <button className="h-[22px] w-[70px] border border-[#adadad] bg-[#e1e1e1]">Cancel</button>
        </div>
      </div>
    </div>
  );
}

function CategoryList() {
  return (
    <div className="w-[115px] shrink-0">
      <h2 id="category-label">
        <u>C</u>ategory:
      </h2>
      <div className="mt-[2px] flex h-[248px] border border-[#828790] p-px">
        <ul role="listbox" aria-labelledby="category-label" className="grid h-[147px] flex-1 auto-rows-fr">
          {categories.map((name) => (
            <Option key={name} label={name} selected={name === 'Custom'} />
          ))}
        </ul>
        <div className="flex w-4 flex-col items-center justify-between bg-[#f0f0f0] py-[6px]">
          <ListArrow d="M1 5l3.500-4L8 5" color="#bbb" />
          <ListArrow d="M1 1l3.500 4L8 1" color="#bbb" />
        </div>
      </div>
    </div>
  );
}

function TypePanel() {
  return (
    <div className="flex flex-1 flex-col pt-[16px]">
      <fieldset className="h-[36px] border border-[#dcdcdc] px-[7px]">
        <legend className="-ml-[4px] px-[2px]">Sample</legend>
        <output className="block pt-[4px]">1.20</output>
      </fieldset>
      <label htmlFor="format-type" className="mt-[4px]">
        <u>T</u>ype:
      </label>
      <div className="relative mt-[2px] h-[18px]">
        <input
          id="format-type"
          className="block h-full w-full border border-b-0 border-[#828790] bg-white pl-[3px]"
          defaultValue="0.00"
        />
        <span className="absolute top-[3px] left-[24px] h-[12px] w-px bg-black" />
        <svg className="absolute top-[3px] left-[41px]" width="9" height="15" fill="none" stroke="#222">
          <path d="M1 .5h2.500l1 1 1-1H8M4.500 1.500v12M1 14.500h2.500l1-1 1 1H8" />
        </svg>
      </div>
      <div className="flex h-[151px] border border-[#828790] p-px">
        <ul role="listbox" aria-label="Type" className="grid h-[147px] flex-1 auto-rows-fr">
          {formatCodes.map((code) => (
            <Option key={code} label={code} selected={code === '0.00'} />
          ))}
        </ul>
        <div className="flex w-4 flex-col items-center bg-[#f0f0f0] py-[6px]">
          <ListArrow d="M1 5l3.500-4L8 5" color="#444" />
          <div className="mt-1 h-[39px] w-[14px] bg-[#cdcdcd]" />
          <div className="flex-1" />
          <ListArrow d="M1 1l3.500 4L8 1" color="#444" />
        </div>
      </div>
      <button
        disabled
        className="mt-[10px] h-[21px] w-[70px] self-end border border-[#bfbfbf] bg-[#d9d9d9] text-[#838383]"
      >
        Delete
      </button>
    </div>
  );
}

function Option({ label, selected }: { label: string; selected: boolean }) {
  return (
    <li
      role="option"
      aria-selected={selected}
      className={clsx('flex min-h-0 items-center pl-[2px] leading-[12px]', selected && 'bg-[#0078d7] text-white')}
    >
      {label}
    </li>
  );
}

function ListArrow({ d, color }: { d: string; color: string }) {
  return (
    <svg className="shrink-0" width="9" height="6" fill="none" stroke={color} strokeWidth="1.600">
      <path d={d} />
    </svg>
  );
}
